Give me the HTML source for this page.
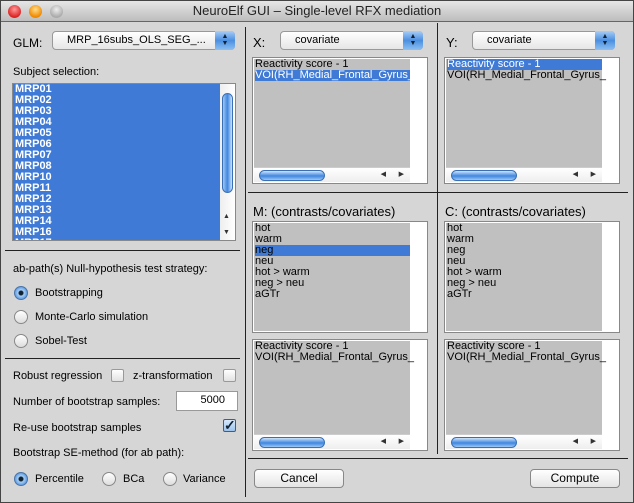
<!DOCTYPE html><html><head><style>
*{box-sizing:border-box}
body{margin:0;width:634px;height:503px;overflow:hidden;background:#d6d6d6;font-family:"Liberation Sans",sans-serif;font-size:11px;color:#000;position:relative}
.a{position:absolute}
.title{left:0;top:0;width:634px;height:22px;background:linear-gradient(#e8e8e8,#bdbdbd);border-bottom:1px solid #666;text-align:center;font-size:13px;line-height:22px;color:#222}
.dot{width:13px;height:13px;border-radius:50%;top:5px}
.hl{height:1px;background:#222}
.vl{width:1px;background:#222}
.pop{height:19px;border:1px solid #999;border-radius:4px;background:linear-gradient(#fff,#e6e6e6);font-size:11px;line-height:16px;padding-left:14px}
.pop .ar{position:absolute;right:-1px;top:-1px;width:20px;height:19px;border-radius:0 4px 4px 0;background:linear-gradient(#a9cdf6,#4b8fe0 50%,#8dc0f2);color:#123;font-size:7px;line-height:7px;text-align:center;padding-top:2px}
.lb{border:1px solid #888;background:#fff}
.lb .in{position:absolute;left:1px;top:1px;bottom:1px;right:17px;background:#c0c0c0;line-height:11px;padding-left:1px}
.sel{background:#3f7bd6;color:#fff}
.hs{position:absolute;left:1px;right:17px;bottom:1px;height:15px;background:linear-gradient(#fff,#eee);border-top:1px solid #ccc}
.thumb{position:absolute;left:5px;top:2px;width:66px;height:11px;border-radius:6px;background:linear-gradient(#cfe4fb,#3f86e0 55%,#9cc7f4);border:1px solid #3a6fb5}
.arr{position:absolute;top:2px;font-size:7px;color:#333}
.rad{width:14px;height:14px;border-radius:50%;border:1px solid #888;background:linear-gradient(#fff,#ddd)}
.rad.on{background:radial-gradient(circle,#123 0 2px,#a8cff5 3px,#4b8fe0 7px);border-color:#4a74a8}
.cb{width:13px;height:13px;border:1px solid #999;border-radius:2px;background:linear-gradient(#fff,#e2e2e2)}
.btn{height:19px;border:1px solid #888;border-radius:4px;background:linear-gradient(#fff,#e4e4e4);text-align:center;font-size:12px;line-height:17px}
</style></head><body>
<div class="a title">NeuroElf GUI – Single-level RFX mediation</div>
<div class="a dot" style="left:8px;background:radial-gradient(circle at 50% 35%,#f99,#d22 70%)"></div>
<div class="a dot" style="left:29px;background:radial-gradient(circle at 50% 35%,#fd8,#e80 70%)"></div>
<div class="a dot" style="left:50px;background:radial-gradient(circle at 50% 35%,#eee,#aaa 70%)"></div>

<div class="a vl" style="left:245px;top:27px;height:470px"></div>
<div class="a vl" style="left:437px;top:23px;height:431px"></div>
<div class="a hl" style="left:248px;top:192px;width:380px"></div>
<div class="a hl" style="left:248px;top:458px;width:380px"></div>
<div class="a hl" style="left:5px;top:250px;width:235px"></div>
<div class="a hl" style="left:5px;top:358px;width:235px"></div>

<div class="a" style="left:13px;top:36px;font-size:12px">GLM:</div>
<div class="a pop" style="left:52px;top:31px;width:183px">MRP_16subs_OLS_SEG_...<div class="ar">▲<br>▼</div></div>
<div class="a" style="left:13px;top:66px">Subject selection:</div>
<div class="a" style="left:12px;top:83px;width:224px;height:158px;border:1px solid #888;background:#3f7bd6;color:#fff;line-height:11px;padding-left:2px;overflow:hidden;font-weight:bold;font-size:11px">MRP01<br>MRP02<br>MRP03<br>MRP04<br>MRP05<br>MRP06<br>MRP07<br>MRP08<br>MRP10<br>MRP11<br>MRP12<br>MRP13<br>MRP14<br>MRP16<br>MRP17
<div class="a" style="right:0;top:0;width:15px;height:156px;background:linear-gradient(90deg,#eee,#fff)"><div class="a" style="left:2px;top:9px;width:11px;height:100px;border-radius:6px;background:linear-gradient(90deg,#9cc7f4,#3f86e0 50%,#cfe4fb);border:1px solid #3a6fb5"></div><div class="a" style="left:3px;top:127px;color:#333;font-size:7px">▲</div><div class="a" style="left:3px;top:143px;color:#333;font-size:7px">▼</div></div></div>

<div class="a" style="left:13px;top:263px">ab-path(s) Null-hypothesis test strategy:</div>
<div class="a rad on" style="left:14px;top:286px"></div><div class="a" style="left:35px;top:287px">Bootstrapping</div>
<div class="a rad" style="left:14px;top:310px"></div><div class="a" style="left:35px;top:311px">Monte-Carlo simulation</div>
<div class="a rad" style="left:14px;top:334px"></div><div class="a" style="left:35px;top:335px">Sobel-Test</div>

<div class="a" style="left:13px;top:370px">Robust regression</div><div class="a cb" style="left:111px;top:369px"></div>
<div class="a" style="left:133px;top:370px">z-transformation</div><div class="a cb" style="left:223px;top:369px"></div>
<div class="a" style="left:13px;top:396px">Number of bootstrap samples:</div>
<div class="a" style="left:176px;top:391px;width:62px;height:20px;background:#fff;border:1px solid #999;text-align:right;padding-right:12px;line-height:17px">5000</div>
<div class="a" style="left:13px;top:422px">Re-use bootstrap samples</div>
<div class="a cb" style="left:223px;top:419px;background:linear-gradient(#d8e9fb,#9cc3ee);border-color:#557;font-size:14px;line-height:10px;color:#123;font-weight:bold">✓</div>
<div class="a" style="left:13px;top:447px">Bootstrap SE-method (for ab path):</div>
<div class="a rad on" style="left:14px;top:472px"></div><div class="a" style="left:35px;top:473px">Percentile</div>
<div class="a rad" style="left:102px;top:472px"></div><div class="a" style="left:123px;top:473px">BCa</div>
<div class="a rad" style="left:163px;top:472px"></div><div class="a" style="left:183px;top:473px">Variance</div>

<div class="a" style="left:253px;top:35px;font-size:13px">X:</div>
<div class="a pop" style="left:280px;top:31px;width:143px">covariate<div class="ar">▲<br>▼</div></div>
<div class="a" style="left:446px;top:35px;font-size:13px">Y:</div>
<div class="a pop" style="left:472px;top:31px;width:143px">covariate<div class="ar">▲<br>▼</div></div>

<div class="a lb" style="left:252px;top:57px;width:176px;height:127px"><div class="in">Reactivity score - 1<br><div class="sel">VOI(RH_Medial_Frontal_Gyrus_</div></div><div class="hs"><div class="thumb"></div><div class="arr" style="right:24px">◀</div><div class="arr" style="right:6px">▶</div></div></div>
<div class="a lb" style="left:444px;top:57px;width:176px;height:127px"><div class="in"><div class="sel">Reactivity score - 1</div>VOI(RH_Medial_Frontal_Gyrus_</div><div class="hs"><div class="thumb"></div><div class="arr" style="right:24px">◀</div><div class="arr" style="right:6px">▶</div></div></div>

<div class="a" style="left:253px;top:204px;font-size:13px">M: (contrasts/covariates)</div>
<div class="a" style="left:445px;top:204px;font-size:13px">C: (contrasts/covariates)</div>
<div class="a lb" style="left:252px;top:221px;width:176px;height:112px"><div class="in">hot<br>warm<br><div class="sel" style="color:#000">neg</div>neu<br>hot &gt; warm<br>neg &gt; neu<br>aGTr</div></div>
<div class="a lb" style="left:444px;top:221px;width:176px;height:112px"><div class="in">hot<br>warm<br>neg<br>neu<br>hot &gt; warm<br>neg &gt; neu<br>aGTr</div></div>
<div class="a lb" style="left:252px;top:339px;width:176px;height:112px"><div class="in">Reactivity score - 1<br>VOI(RH_Medial_Frontal_Gyrus_</div><div class="hs"><div class="thumb"></div><div class="arr" style="right:24px">◀</div><div class="arr" style="right:6px">▶</div></div></div>
<div class="a lb" style="left:444px;top:339px;width:176px;height:112px"><div class="in">Reactivity score - 1<br>VOI(RH_Medial_Frontal_Gyrus_</div><div class="hs"><div class="thumb"></div><div class="arr" style="right:24px">◀</div><div class="arr" style="right:6px">▶</div></div></div>

<div class="a btn" style="left:254px;top:469px;width:90px">Cancel</div>
<div class="a btn" style="left:530px;top:469px;width:90px">Compute</div>
<div class="a" style="left:0;top:0;width:634px;height:503px;border:1px solid #444;pointer-events:none"></div>
</body></html>
